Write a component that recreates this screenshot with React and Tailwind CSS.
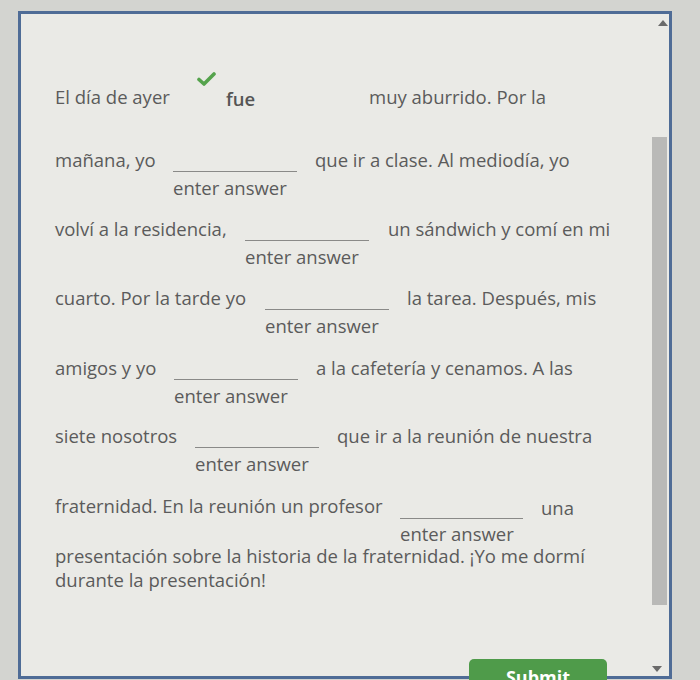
import React from 'react'

const font = { fontFamily: '"Open Sans", "Noto Sans", sans-serif' }

function Blank() {
  return (
    <div className="w-[124px] shrink-0 flex flex-col">
      <div className="h-[24px] border-b-[1.5px] border-[#8a8a88]"></div>
      <div className="mt-[6px] leading-[20px] whitespace-nowrap">enter answer</div>
    </div>
  )
}

function Row({ height, lead, leadWidth, gapAfter, trail }) {
  return (
    <div className={`flex items-start shrink-0 ${height}`}>
      <span className={`${leadWidth} shrink-0 leading-[24px] whitespace-nowrap`}>{lead}</span>
      <Blank />
      <span className={`${gapAfter} leading-[24px] whitespace-nowrap`}>{trail}</span>
    </div>
  )
}

export default function App() {
  return (
    <div className="w-[700px] h-[680px] bg-[#d3d4d0] overflow-hidden pt-[11px] pl-[18px]" style={font}>
      <div className="w-[654px] h-[668px] border-[3px] border-[#4f6c96] bg-[#eaeae6] flex text-[18.5px] text-[#5b5b5b]">
        {/* question text */}
        <div className="flex-1 pl-[34px] pt-[71px] flex flex-col">
          {/* answered row */}
          <div className="flex items-start h-[63px] shrink-0">
            <span className="w-[142px] shrink-0 leading-[24px] whitespace-nowrap">El día de ayer</span>
            <span className="w-[29px] shrink-0 -mt-[13px]">
              <svg width="19" height="14" viewBox="0 0 19 14">
                <path d="M2 7.5 L7 12 L17 2" fill="none" stroke="#55a34c" strokeWidth="3.6" strokeLinecap="round" strokeLinejoin="round" />
              </svg>
            </span>
            <span className="w-[143px] shrink-0 mt-[2px] leading-[24px] font-semibold text-[#555]">fue</span>
            <span className="leading-[24px] whitespace-nowrap">muy aburrido. Por la</span>
          </div>

          <Row height="h-[69px]" lead="mañana, yo" leadWidth="w-[118px]" gapAfter="ml-[18px]" trail="que ir a clase. Al mediodía, yo" />
          <Row height="h-[69px]" lead="volví a la residencia," leadWidth="w-[190px]" gapAfter="ml-[19px]" trail="un sándwich y comí en mi" />
          <Row height="h-[70px]" lead="cuarto. Por la tarde yo" leadWidth="w-[210px]" gapAfter="ml-[18px]" trail="la tarea. Después, mis" />
          <Row height="h-[68px]" lead="amigos y yo" leadWidth="w-[119px]" gapAfter="ml-[18px]" trail="a la cafetería y cenamos. A las" />
          <Row height="h-[70px]" lead="siete nosotros" leadWidth="w-[140px]" gapAfter="ml-[18px]" trail="que ir a la reunión de nuestra" />

          <div className="flex items-start h-[50px] shrink-0">
            <span className="w-[345px] shrink-0 leading-[24px] whitespace-nowrap">fraternidad. En la reunión un profesor</span>
            <div className="w-[123px] shrink-0 flex flex-col mt-[1px]">
              <div className="h-[24px] border-b-[1.5px] border-[#8a8a88]"></div>
              <div className="mt-[7px] leading-[16px] whitespace-nowrap">enter answer</div>
            </div>
            <span className="ml-[18px] mt-[2px] leading-[24px]">una</span>
          </div>

          <p className="leading-[24px] w-[560px] shrink-0">
            presentación sobre la historia de la fraternidad. ¡Yo me dormí durante la presentación!
          </p>

          <div className="mt-[67px] ml-[414px] w-[138px] h-[36px] shrink-0 rounded-[5px] bg-[#4f9b4a] text-white font-bold text-[18px] flex justify-center pt-[7px] leading-[22px]">
            Submit
          </div>
        </div>

        {/* scrollbar */}
        <div className="w-[18px] shrink-0 flex flex-col">
          <div className="h-[123px] shrink-0 flex justify-end pr-[1px] pt-[6px]">
            <svg width="10" height="6" viewBox="0 0 10 6">
              <path d="M0 6 L5 0 L10 6 Z" fill="#6a6a6a" />
            </svg>
          </div>
          <div className="ml-[1px] w-[15px] h-[468px] shrink-0 bg-[#b9b9b7]"></div>
          <div className="flex-1 flex items-end pb-[4px] pl-[1px]">
            <svg width="10" height="6" viewBox="0 0 10 6">
              <path d="M0 0 L10 0 L5 6 Z" fill="#6a6a6a" />
            </svg>
          </div>
        </div>
      </div>
    </div>
  )
}
